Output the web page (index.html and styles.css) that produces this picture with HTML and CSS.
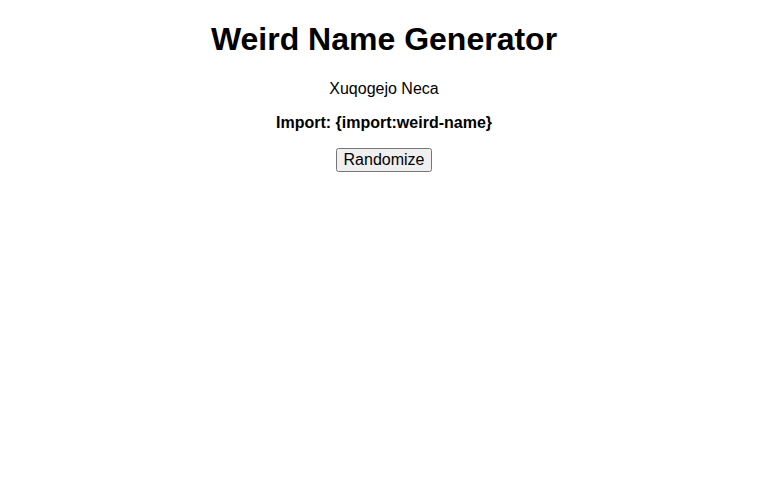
FILE: index.html
```html
<!DOCTYPE html>
<html lang="en">
<head>
  <meta charset="UTF-8">
  <title>Weird Name Generator</title>
  <link rel="stylesheet" href="styles.css">
</head>
<body>
  <h1>Weird Name Generator</h1>
  <p id="name">Xuqogejo Neca</p>
  <p class="import">Import: {import:weird-name}</p>
  <p><button onclick="randomize()">Randomize</button></p>

  <script>
    const CONS = 'bcdfgjklmnpqrstvxz';
    const VOWELS = 'aeiou';

    function pick(s) {
      return s[Math.floor(Math.random() * s.length)];
    }

    function word(syllables) {
      let w = '';
      for (let i = 0; i < syllables; i++) w += pick(CONS) + pick(VOWELS);
      return w.charAt(0).toUpperCase() + w.slice(1);
    }

    function randomize() {
      document.getElementById('name').innerText = `${word(4)} ${word(2)}`;
    }
  </script>
</body>
</html>
```

FILE: styles.css
```css
body {
  font-family: "Liberation Sans", Arial, sans-serif;
  text-align: center;
  margin: 0 8px;
  color: #000;
  background: #fff;
}
.import {
  font-weight: bold;
}
button {
  font-family: "Liberation Sans", Arial, sans-serif;
  font-size: 16px;
}
```
